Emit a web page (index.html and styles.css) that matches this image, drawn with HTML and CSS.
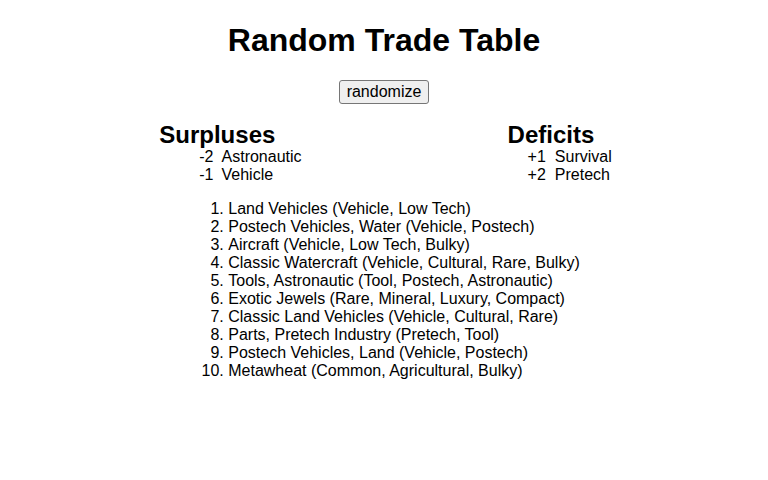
FILE: index.html
```html
<!DOCTYPE html>
<html lang="en">
<head>
  <meta charset="UTF-8">
  <meta name="viewport" content="width=device-width, initial-scale=1.0">
  <title>Random Trade Table</title>
  <link rel="stylesheet" href="styles.css">
</head>
<body>
  <h1 class="title">Random Trade Table</h1>
  <div class="controls">
    <button id="randomize-btn">randomize</button>
  </div>

  <div class="balance">
    <div class="column surplus">
      <h2>Surpluses</h2>
      <div class="mods">
        <span>-2</span><span>Astronautic</span>
        <span>-1</span><span>Vehicle</span>
      </div>
    </div>
    <div class="column deficit">
      <h2>Deficits</h2>
      <div class="mods">
        <span>+1</span><span>Survival</span>
        <span>+2</span><span>Pretech</span>
      </div>
    </div>
  </div>

  <ol class="goods" id="goods">
    <li>Land Vehicles (Vehicle, Low Tech)</li>
    <li>Postech Vehicles, Water (Vehicle, Postech)</li>
    <li>Aircraft (Vehicle, Low Tech, Bulky)</li>
    <li>Classic Watercraft (Vehicle, Cultural, Rare, Bulky)</li>
    <li>Tools, Astronautic (Tool, Postech, Astronautic)</li>
    <li>Exotic Jewels (Rare, Mineral, Luxury, Compact)</li>
    <li>Classic Land Vehicles (Vehicle, Cultural, Rare)</li>
    <li>Parts, Pretech Industry (Pretech, Tool)</li>
    <li>Postech Vehicles, Land (Vehicle, Postech)</li>
    <li>Metawheat (Common, Agricultural, Bulky)</li>
  </ol>
</body>
</html>
```

FILE: styles.css
```css
body {
  margin: 0;
  font-family: "Liberation Sans", Arial, sans-serif;
  font-size: 16px;
  line-height: 18px;
  color: #000;
  background-color: #fff;
}

.title {
  font-size: 32px;
  line-height: 37px;
  text-align: center;
  margin: 22px 0 21px;
}

.controls {
  text-align: center;
}

.controls button {
  font-family: "Liberation Sans", Arial, sans-serif;
  font-size: 16px;
  line-height: 18px;
  padding: 2px 7px;
  color: #000;
  background-color: #efefef;
  border: 1px solid #767676;
  border-radius: 3px;
}

.balance {
  display: flex;
  justify-content: center;
  gap: 206px;
  margin-top: 17px;
  padding-left: 3px;
}

.column h2 {
  font-size: 24px;
  line-height: 27px;
  margin: 0;
}

.mods {
  display: grid;
  grid-template-columns: auto auto;
  justify-content: start;
  column-gap: 8px;
}

.surplus .mods {
  margin-left: 40px;
}

.deficit .mods {
  margin-left: 20px;
}

.deficit .mods span:nth-child(odd) {
  margin-right: 1px;
}

.goods {
  width: fit-content;
  margin: 16px auto 0;
  padding-left: 40px;
}
```
